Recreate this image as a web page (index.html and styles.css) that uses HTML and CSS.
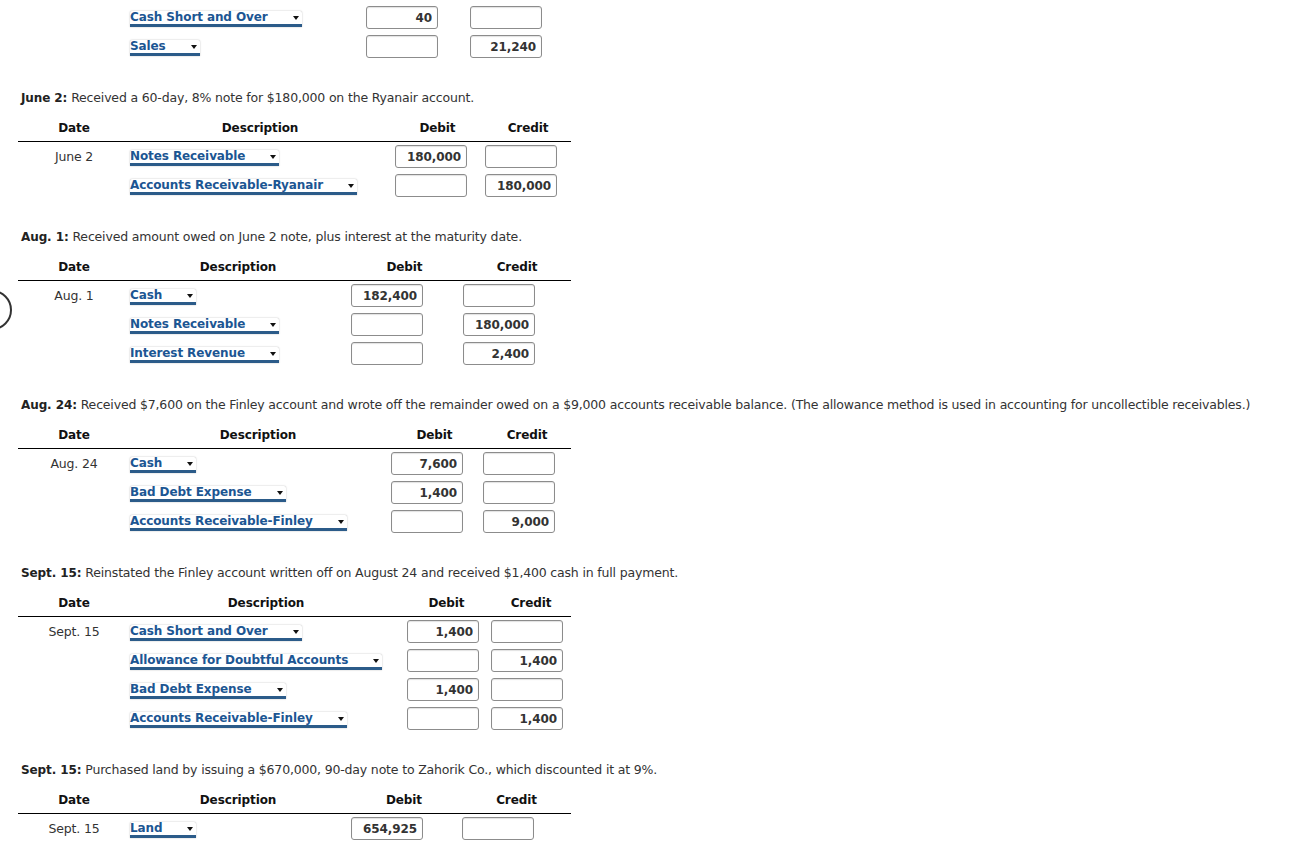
FILE: index.html
```html
<!DOCTYPE html>
<html lang="en">
<head>
<meta charset="utf-8">
<title>Journal entries</title>
<link rel="stylesheet" href="styles.css">
</head>
<body>
<div class="page">
  <span class="ring" aria-hidden="true"></span>

  <div class="journal partial cols-top">
    <div class="cell date"></div>
    <div class="cell desc"></div>
    <div class="cell debit"><input class="amt" type="text" value="" readonly></div>
    <div class="cell credit"><input class="amt" type="text" value="" readonly></div>

    <div class="cell date"></div>
    <div class="cell desc"><span class="sel">Cash Short and Over<i class="arr"></i></span></div>
    <div class="cell debit"><input class="amt" type="text" value="40" readonly></div>
    <div class="cell credit"><input class="amt" type="text" value="" readonly></div>

    <div class="cell date"></div>
    <div class="cell desc"><span class="sel">Sales<i class="arr"></i></span></div>
    <div class="cell debit"><input class="amt" type="text" value="" readonly></div>
    <div class="cell credit"><input class="amt" type="text" value="21,240" readonly></div>
  </div>

  <section class="entry">
    <p class="prompt"><b>June 2:</b> Received a 60-day, 8% note for $180,000 on the Ryanair account.</p>
    <div class="journal cols-june">
      <div class="hd">Date</div><div class="hd">Description</div><div class="hd">Debit</div><div class="hd">Credit</div>

      <div class="cell date">June 2</div>
      <div class="cell desc"><span class="sel">Notes Receivable<i class="arr"></i></span></div>
      <div class="cell debit"><input class="amt" type="text" value="180,000" readonly></div>
      <div class="cell credit"><input class="amt" type="text" value="" readonly></div>

      <div class="cell date"></div>
      <div class="cell desc"><span class="sel">Accounts Receivable-Ryanair<i class="arr"></i></span></div>
      <div class="cell debit"><input class="amt" type="text" value="" readonly></div>
      <div class="cell credit"><input class="amt" type="text" value="180,000" readonly></div>
    </div>
  </section>

  <section class="entry">
    <p class="prompt"><b>Aug. 1:</b> Received amount owed on June 2 note, plus interest at the maturity date.</p>
    <div class="journal cols-aug1">
      <div class="hd">Date</div><div class="hd">Description</div><div class="hd">Debit</div><div class="hd">Credit</div>

      <div class="cell date">Aug. 1</div>
      <div class="cell desc"><span class="sel">Cash<i class="arr"></i></span></div>
      <div class="cell debit"><input class="amt" type="text" value="182,400" readonly></div>
      <div class="cell credit"><input class="amt" type="text" value="" readonly></div>

      <div class="cell date"></div>
      <div class="cell desc"><span class="sel">Notes Receivable<i class="arr"></i></span></div>
      <div class="cell debit"><input class="amt" type="text" value="" readonly></div>
      <div class="cell credit"><input class="amt" type="text" value="180,000" readonly></div>

      <div class="cell date"></div>
      <div class="cell desc"><span class="sel">Interest Revenue<i class="arr"></i></span></div>
      <div class="cell debit"><input class="amt" type="text" value="" readonly></div>
      <div class="cell credit"><input class="amt" type="text" value="2,400" readonly></div>
    </div>
  </section>

  <section class="entry">
    <p class="prompt"><b>Aug. 24:</b> Received $7,600 on the Finley account and wrote off the remainder owed on a $9,000 accounts receivable balance. (The allowance method is used in accounting for uncollectible receivables.)</p>
    <div class="journal cols-aug24">
      <div class="hd">Date</div><div class="hd">Description</div><div class="hd">Debit</div><div class="hd">Credit</div>

      <div class="cell date">Aug. 24</div>
      <div class="cell desc"><span class="sel">Cash<i class="arr"></i></span></div>
      <div class="cell debit"><input class="amt" type="text" value="7,600" readonly></div>
      <div class="cell credit"><input class="amt" type="text" value="" readonly></div>

      <div class="cell date"></div>
      <div class="cell desc"><span class="sel">Bad Debt Expense<i class="arr"></i></span></div>
      <div class="cell debit"><input class="amt" type="text" value="1,400" readonly></div>
      <div class="cell credit"><input class="amt" type="text" value="" readonly></div>

      <div class="cell date"></div>
      <div class="cell desc"><span class="sel">Accounts Receivable-Finley<i class="arr"></i></span></div>
      <div class="cell debit"><input class="amt" type="text" value="" readonly></div>
      <div class="cell credit"><input class="amt" type="text" value="9,000" readonly></div>
    </div>
  </section>

  <section class="entry">
    <p class="prompt"><b>Sept. 15:</b> Reinstated the Finley account written off on August 24 and received $1,400 cash in full payment.</p>
    <div class="journal cols-sep15">
      <div class="hd">Date</div><div class="hd">Description</div><div class="hd">Debit</div><div class="hd">Credit</div>

      <div class="cell date">Sept. 15</div>
      <div class="cell desc"><span class="sel">Cash Short and Over<i class="arr"></i></span></div>
      <div class="cell debit"><input class="amt" type="text" value="1,400" readonly></div>
      <div class="cell credit"><input class="amt" type="text" value="" readonly></div>

      <div class="cell date"></div>
      <div class="cell desc"><span class="sel">Allowance for Doubtful Accounts<i class="arr"></i></span></div>
      <div class="cell debit"><input class="amt" type="text" value="" readonly></div>
      <div class="cell credit"><input class="amt" type="text" value="1,400" readonly></div>

      <div class="cell date"></div>
      <div class="cell desc"><span class="sel">Bad Debt Expense<i class="arr"></i></span></div>
      <div class="cell debit"><input class="amt" type="text" value="1,400" readonly></div>
      <div class="cell credit"><input class="amt" type="text" value="" readonly></div>

      <div class="cell date"></div>
      <div class="cell desc"><span class="sel">Accounts Receivable-Finley<i class="arr"></i></span></div>
      <div class="cell debit"><input class="amt" type="text" value="" readonly></div>
      <div class="cell credit"><input class="amt" type="text" value="1,400" readonly></div>
    </div>
  </section>

  <section class="entry">
    <p class="prompt"><b>Sept. 15:</b> Purchased land by issuing a $670,000, 90-day note to Zahorik Co., which discounted it at 9%.</p>
    <div class="journal cols-land">
      <div class="hd">Date</div><div class="hd">Description</div><div class="hd">Debit</div><div class="hd">Credit</div>

      <div class="cell date">Sept. 15</div>
      <div class="cell desc"><span class="sel">Land<i class="arr"></i></span></div>
      <div class="cell debit"><input class="amt" type="text" value="654,925" readonly></div>
      <div class="cell credit"><input class="amt" type="text" value="" readonly></div>

      <div class="cell date"></div>
      <div class="cell desc"></div>
      <div class="cell debit"><input class="amt" type="text" value="" readonly></div>
      <div class="cell credit"><input class="amt" type="text" value="" readonly></div>
    </div>
  </section>
</div>
</body>
</html>
```

FILE: styles.css
```css
html, body {
  margin: 0;
  padding: 0;
  background: #ffffff;
  overflow: hidden;
}

body {
  font-family: "DejaVu Sans", Verdana, "Liberation Sans", sans-serif;
  font-size: 12.5px;
  letter-spacing: -0.17px;
  color: #333333;
}

.page {
  position: relative;
  padding: 0 0 0 18px;
  height: 846px;
  overflow: hidden;
}

.ring {
  position: absolute;
  left: -28px;
  top: 290px;
  width: 40px;
  height: 40px;
  box-sizing: border-box;
  border: 2.5px solid #333333;
  border-radius: 50%;
}

.partial {
  margin-top: -26px;
  margin-bottom: 28px;
}

.entry {
  margin-bottom: 28px;
}

.prompt {
  margin: 0 0 14px 3px;
  padding-top: 1px;
  height: 15px;
  line-height: 16px;
  white-space: nowrap;
  color: #333333;
}

.prompt b {
  font-weight: bold;
  font-size: 12px;
  letter-spacing: -0.1px;
  color: #222222;
}

.journal {
  display: grid;
  width: 553px;
}

.cols-top   { grid-template-columns: 112px 231px 109px 101px; }
.cols-june  { grid-template-columns: 112px 260px 95px 86px; }
.cols-aug1  { grid-template-columns: 112px 216px 117px 108px; }
.cols-aug24 { grid-template-columns: 112px 256px 97px 88px; }
.cols-sep15 { grid-template-columns: 112px 272px 89px 80px; }
.cols-land  { grid-template-columns: 112px 216px 116px 109px; }

.hd {
  font-weight: bold;
  font-size: 12px;
  letter-spacing: -0.1px;
  color: #111111;
  text-align: center;
  line-height: 16px;
  padding-top: 1px;
  padding-bottom: 5px;
  border-bottom: 1px solid #000000;
}

.cell {
  height: 29px;
  display: flex;
  align-items: center;
}

.date {
  justify-content: center;
  color: #333333;
}

.desc {
  justify-content: flex-start;
}

.debit {
  padding-left: 5px;
}

.credit {
  padding-left: 0;
}

.sel {
  display: inline-flex;
  align-items: center;
  height: 16px;
  box-sizing: border-box;
  min-width: 66px;
  padding-right: 3px;
  line-height: 13px;
  font-size: 12px;
  letter-spacing: -0.1px;
  font-weight: bold;
  color: #1c5693;
  background: #ffffff;
  border-bottom: 3px solid #2b5b89;
  box-shadow: 0 0 1.5px rgba(0, 0, 0, 0.35);
  border-radius: 2px 2px 0 0;
  white-space: nowrap;
  margin-top: 3px;
}

.arr {
  display: inline-block;
  flex: none;
  width: 0;
  height: 0;
  margin-left: auto;
  border-left: 3.5px solid transparent;
  border-right: 3.5px solid transparent;
  border-top: 4px solid #111111;
}

.sel .arr {
  margin-left: 25px;
}

.amt {
  box-sizing: border-box;
  width: 72px;
  height: 23px;
  margin: 0;
  padding: 0 5px 0 2px;
  border: 1px solid #8c8c8c;
  border-radius: 3px;
  box-shadow: inset 0 1px 1px rgba(0, 0, 0, 0.12);
  background: #ffffff;
  font-family: "DejaVu Sans", Verdana, "Liberation Sans", sans-serif;
  font-size: 12px;
  letter-spacing: -0.1px;
  font-weight: bold;
  color: #333333;
  text-align: right;
  outline: none;
}
```
